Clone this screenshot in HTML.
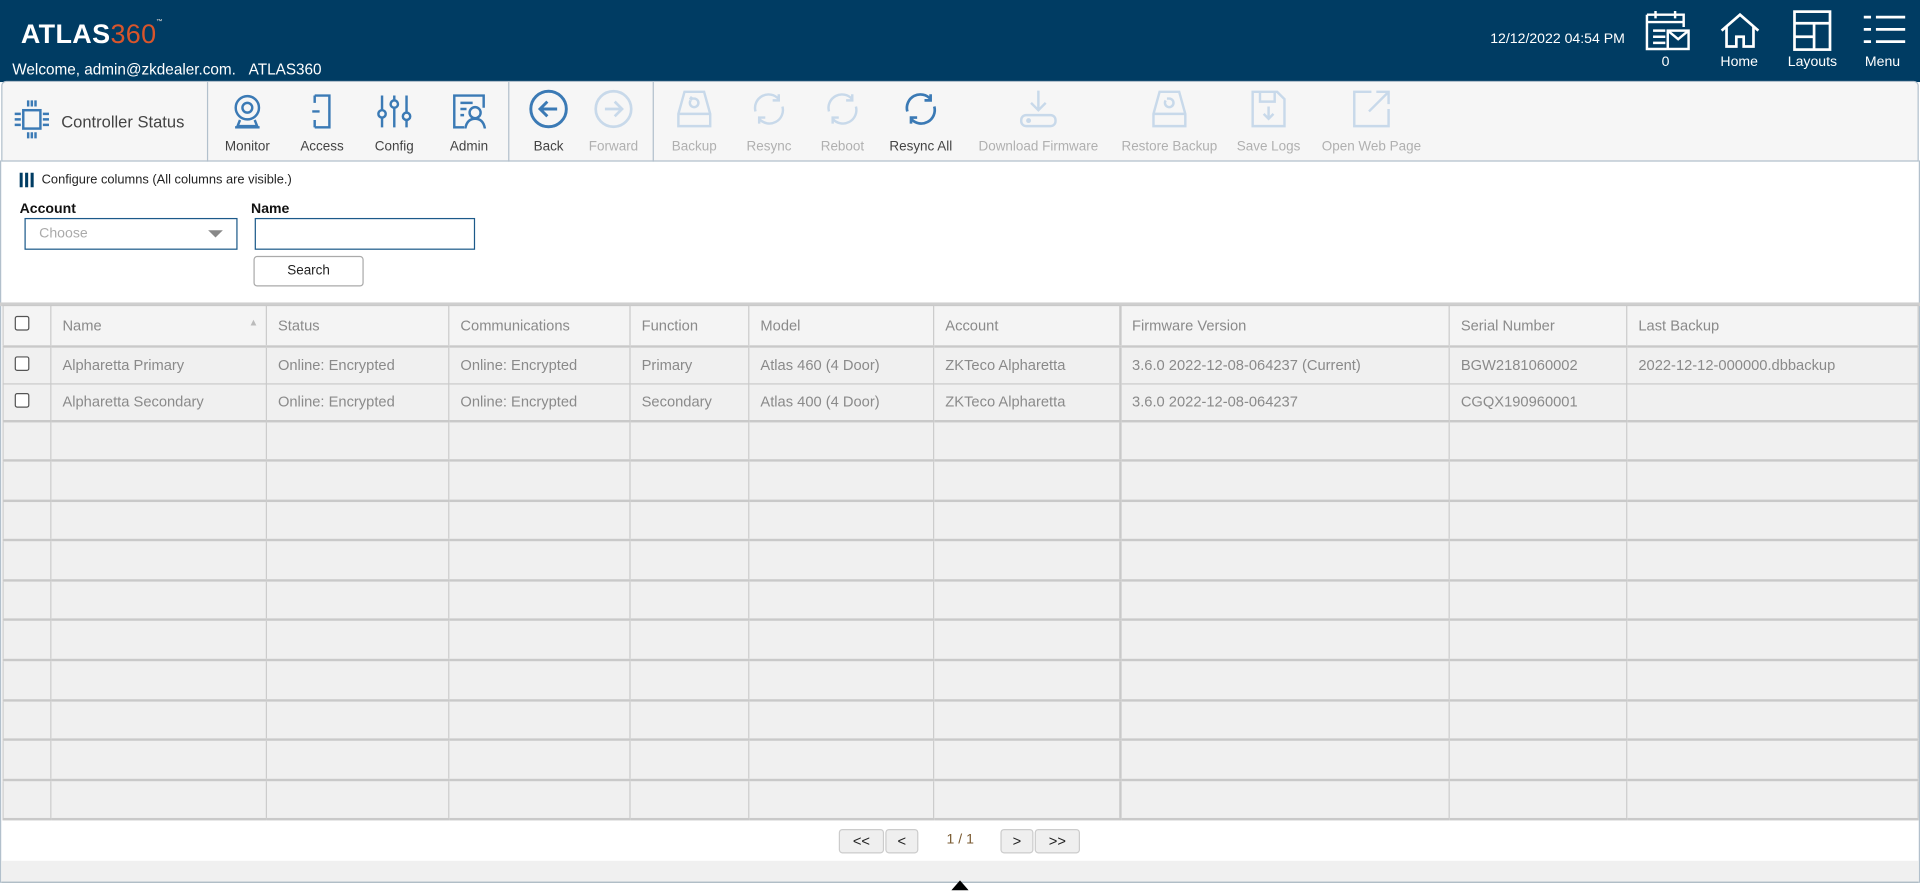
<!DOCTYPE html>
<html><head><meta charset="utf-8"><style>
*{box-sizing:border-box;margin:0;padding:0}
html,body{width:1920px;height:892px;overflow:hidden;background:#fff;font-family:"Liberation Sans",sans-serif}
#w{position:absolute;left:0;top:0;width:1568px;height:728px;transform:scale(1.22449);transform-origin:0 0}
.a{position:absolute}
#hdr{left:0;top:0;width:1568px;height:67px;background:#003c63}
.wt{color:#fff;font-size:12.5px}
#tb{left:1px;top:66px;width:1566px;height:66px;background:#f6f6f6;border:1px solid #b2c0cc;border-radius:4px 4px 0 0}
.div{top:0;width:1px;height:65px;background:#b2c0cc}
.btn{top:6px;width:80px;height:56px;text-align:center;font-size:11px;color:#444}
.btn svg{display:block;margin:0 auto}
.btn span{position:absolute;left:0;right:0;top:41px;white-space:nowrap}
.dis{color:#b0b0b0}
.lbl{font-size:11.5px;font-weight:bold;color:#111}
table{border-collapse:collapse;position:absolute;left:2px;top:249px;width:1565px;table-layout:fixed;font-size:12px;color:#8a8a8a}
td{border:1px solid #c9c9c9;border-bottom:2px solid #c9c9c9;height:32.6px;padding-left:9px;background:#f0f0f0;white-space:nowrap;overflow:hidden}
tr.h td{background:#f4f4f4;height:33px}
tr.d td{height:30.5px;border-bottom:1px solid #c9c9c9}
tr.d2 td{border-bottom:2px solid #c9c9c9}
.cb{display:inline-block;width:12px;height:12px;border:1px solid #555;border-radius:2px;background:#fff}
.pb{top:677px;height:20px;border:1px solid #ccc;border-radius:3px;background:#efefef;font-size:12px;color:#222;text-align:center;line-height:18px}
</style></head><body><div id="w">
<div id="hdr" class="a"></div>
<div class="a" style="left:17px;top:15px;font-size:22px;font-weight:bold;color:#fff;letter-spacing:0.3px">ATLAS<span style="color:#d9552b;font-weight:normal">360</span><span style="font-size:5px;vertical-align:top;color:#ccc">™</span></div>
<div class="a wt" style="left:10px;top:50px">Welcome, admin@zkdealer.com. &nbsp;&nbsp;ATLAS360</div>
<div class="a wt" style="left:1217px;top:26px;font-size:11.5px">12/12/2022 04:54 PM</div>
<svg class="a" style="left:1343px;top:8px" width="38" height="34" viewBox="0 0 38 34" fill="none" stroke="#fff" stroke-width="2"><path d="M2 4h30v10M2 4v28h16M2 10h30M9 1v6M25 1v6M7 17h10M7 22h10M7 27h10"/><rect x="19" y="17" width="17" height="15"/><path d="M19 17l8.5 7 8.5-7"/></svg>
<div class="a wt" style="left:1357px;top:45px;font-size:11.5px">0</div>
<svg class="a" style="left:1404px;top:10px" width="34" height="30" viewBox="0 0 34 30" fill="none" stroke="#fff" stroke-width="2.2"><path d="M2 15L17 2l15 13M6 12v16h8v-8h6v8h8V12"/></svg>
<div class="a wt" style="left:1405px;top:45px;font-size:11.5px">Home</div>
<svg class="a" style="left:1464px;top:8px" width="32" height="34" viewBox="0 0 32 34" fill="none" stroke="#fff" stroke-width="2.2"><rect x="1.5" y="1.5" width="29" height="31"/><path d="M1.5 11h29M1.5 22h16M17.5 11v21.5"/></svg>
<div class="a wt" style="left:1460px;top:45px;font-size:11.5px">Layouts</div>
<svg class="a" style="left:1522px;top:12px" width="34" height="26" viewBox="0 0 34 26" stroke="#fff" stroke-width="2.2"><path d="M0 2h6M10 2h24M0 12h6M10 12h24M0 22h6M10 22h24"/></svg>
<div class="a wt" style="left:1523px;top:45px;font-size:11.5px">Menu</div>

<div id="tb" class="a">
<svg class="a" style="left:9px;top:13px" width="30" height="36" viewBox="0 0 30 36" fill="none" stroke="#3b7ab5" stroke-width="2"><rect x="8" y="10" width="14" height="15"/><path d="M12 2v5M15 2v5M18 2v5M12 28v5M15 28v5M18 28v5M1 13h5M1 17.5h5M1 22h5M24 13h5M24 17.5h5M24 22h5"/></svg>
<div class="a" style="left:48px;top:25px;font-size:13.5px;color:#444">Controller Status</div>
<div class="a div" style="left:167px"></div>
<div class="a btn" style="left:160px"><svg style="margin-top:4px" width="26" height="28" viewBox="0 0 26 28" fill="none" stroke="#3b7ab5" stroke-width="2"><circle cx="13" cy="11" r="9.5"/><circle cx="13" cy="11" r="4"/><path d="M7 21l-2 5h16l-2-5M3 27h20"/></svg><span>Monitor</span></div>
<div class="a btn" style="left:221px"><svg style="margin-top:4px" width="26" height="28" viewBox="0 0 26 28" fill="none" stroke="#3b7ab5" stroke-width="2"><path d="M7 1h12v26H7M7 1v6M7 21v6M5 14h6"/></svg><span>Access</span></div>
<div class="a btn" style="left:280px"><svg style="margin-top:4px" width="30" height="28" viewBox="0 0 30 28" fill="none" stroke="#3b7ab5" stroke-width="2"><path d="M5 1v12M5 19v8M15 1v4M15 11v16M25 1v14M25 21v6"/><circle cx="5" cy="16" r="3"/><circle cx="15" cy="8" r="3"/><circle cx="25" cy="18" r="3"/></svg><span>Config</span></div>
<div class="a btn" style="left:341px"><svg style="margin-top:4px" width="30" height="28" viewBox="0 0 30 28" fill="none" stroke="#3b7ab5" stroke-width="2"><path d="M11 27H3V1h24v10M8 7h10M8 12h5M8 17h3"/><circle cx="20" cy="15" r="4.5"/><path d="M12 28c1-6 4-8 8-8s7 2 8 8"/></svg><span>Admin</span></div>
<div class="a div" style="left:413px"></div>
<div class="a btn" style="left:406px"><svg width="32" height="32" viewBox="0 0 32 32" fill="none" stroke="#3b7ab5" stroke-width="2.4"><circle cx="16" cy="16" r="14.5"/><path d="M23 16H9M15 10l-6 6 6 6"/></svg><span>Back</span></div>
<div class="a btn dis" style="left:459px"><svg width="32" height="32" viewBox="0 0 32 32" fill="none" stroke="#c8d9ea" stroke-width="2.2"><circle cx="16" cy="16" r="14.5"/><path d="M9 16h14M17 10l6 6-6 6"/></svg><span>Forward</span></div>
<div class="a div" style="left:531px"></div>
<div class="a btn dis" style="left:525px"><svg width="30" height="32" viewBox="0 0 30 32" fill="none" stroke="#c8d9ea" stroke-width="2"><path d="M7 2h16l5 18v10H2V20zM2 20h26"/><path d="M12 9a3.5 3.5 0 1 0 3-1.5h-2M13 6l-1 1.5 1.5 1"/></svg><span>Backup</span></div>
<div class="a btn dis" style="left:586px"><svg width="32" height="32" viewBox="0 0 32 32" fill="none" stroke="#c8d9ea" stroke-width="2"><path d="M5 18a11 11 0 0 1 19-10M27 14a11 11 0 0 1-19 10"/><path d="M24 4v5h-5" /><path d="M8 28v-5h5"/></svg><span>Resync</span></div>
<div class="a btn dis" style="left:646px"><svg width="32" height="32" viewBox="0 0 32 32" fill="none" stroke="#c8d9ea" stroke-width="2"><path d="M5 18a11 11 0 0 1 19-10M27 14a11 11 0 0 1-19 10"/><path d="M24 4v5h-5"/><path d="M8 28v-5h5"/></svg><span>Reboot</span></div>
<div class="a btn" style="left:710px"><svg width="32" height="32" viewBox="0 0 32 32" fill="none" stroke="#3b7ab5" stroke-width="2.2"><path d="M5 18a11 11 0 0 1 19-10M27 14a11 11 0 0 1-19 10"/><path d="M24 4v5h-5"/><path d="M8 28v-5h5"/></svg><span>Resync All</span></div>
<div class="a btn dis" style="left:784px;width:124px"><svg width="34" height="32" viewBox="0 0 34 32" fill="none" stroke="#c8d9ea" stroke-width="2"><path d="M17 1v16M11 11l6 6 6-6"/><rect x="3" y="21" width="28" height="9" rx="4"/><circle cx="9" cy="25.5" r="1"/></svg><span>Download Firmware</span></div>
<div class="a btn dis" style="left:906px;width:94px"><svg width="30" height="32" viewBox="0 0 30 32" fill="none" stroke="#c8d9ea" stroke-width="2"><path d="M7 2h16l5 18v10H2V20zM2 20h26"/><path d="M12 9a3.5 3.5 0 1 0 3-1.5h-2"/></svg><span>Restore Backup</span></div>
<div class="a btn dis" style="left:994px"><svg width="30" height="32" viewBox="0 0 30 32" fill="none" stroke="#c8d9ea" stroke-width="2"><path d="M2 2h20l6 6v22H2zM8 2v8h12V2"/><path d="M15 14v10M11 20l4 4 4-4"/></svg><span>Save Logs</span></div>
<div class="a btn dis" style="left:1071px;width:94px"><svg width="32" height="32" viewBox="0 0 32 32" fill="none" stroke="#c8d9ea" stroke-width="2"><path d="M16 2H2v28h28V16M20 2h10v10M30 2L14 18"/></svg><span>Open Web Page</span></div>
</div>

<svg class="a" style="left:16px;top:141px" width="12" height="12"><rect x="0" y="0" width="2.5" height="12" fill="#003c63"/><rect x="4.5" y="0" width="2.5" height="12" fill="#003c63"/><rect x="9" y="0" width="2.5" height="12" fill="#003c63"/></svg>
<div class="a" style="left:34px;top:141px;font-size:10.5px;color:#222">Configure columns (All columns are visible.)</div>
<div class="a lbl" style="left:16px;top:165px">Account</div>
<div class="a lbl" style="left:205px;top:165px">Name</div>
<div class="a" style="left:20px;top:178px;width:174px;height:26px;border:1px solid #1c5a8a;font-size:11.5px;color:#aaa;padding:6px 0 0 11px">Choose<span style="position:absolute;right:11px;top:9px;border:6px solid transparent;border-top:6px solid #888;border-bottom:0"></span></div>
<div class="a" style="left:208px;top:178px;width:180px;height:26px;border:1px solid #1c5a8a"></div>
<div class="a" style="left:207px;top:209px;width:90px;height:25px;border:1px solid #aaa;border-radius:3px;font-size:11px;text-align:center;line-height:23px;color:#222">Search</div>
<div class="a" style="left:0;top:131px;width:1px;height:590px;background:#b2c0cc"></div>
<div class="a" style="left:1567px;top:131px;width:1px;height:590px;background:#b2c0cc"></div>
<div class="a" style="left:0;top:247px;width:1568px;height:3px;background:#cfcfcf"></div>

<table>
<colgroup><col style="width:39px"><col style="width:176px"><col style="width:149px"><col style="width:148px"><col style="width:97px"><col style="width:151px"><col style="width:152px"><col style="width:269px"><col style="width:145px"><col></colgroup>
<tr class="h"><td><span class="cb"></span></td><td>Name<span style="float:right;margin-right:6px;font-size:8px;color:#bbb">▲</span></td><td>Status</td><td>Communications</td><td>Function</td><td>Model</td><td>Account</td><td style="border-left:2px solid #c9c9c9">Firmware Version</td><td>Serial Number</td><td>Last Backup</td></tr>
<tr class="d"><td><span class="cb"></span></td><td>Alpharetta Primary</td><td>Online: Encrypted</td><td>Online: Encrypted</td><td>Primary</td><td>Atlas 460 (4 Door)</td><td>ZKTeco Alpharetta</td><td style="border-left:2px solid #c9c9c9">3.6.0 2022-12-08-064237 (Current)</td><td>BGW2181060002</td><td>2022-12-12-000000.dbbackup</td></tr>
<tr class="d d2"><td><span class="cb"></span></td><td>Alpharetta Secondary</td><td>Online: Encrypted</td><td>Online: Encrypted</td><td>Secondary</td><td>Atlas 400 (4 Door)</td><td>ZKTeco Alpharetta</td><td style="border-left:2px solid #c9c9c9">3.6.0 2022-12-08-064237</td><td>CGQX190960001</td><td></td></tr>
<tr><td></td><td></td><td></td><td></td><td></td><td></td><td></td><td style="border-left:2px solid #c9c9c9"></td><td></td><td></td></tr>
<tr><td></td><td></td><td></td><td></td><td></td><td></td><td></td><td style="border-left:2px solid #c9c9c9"></td><td></td><td></td></tr>
<tr><td></td><td></td><td></td><td></td><td></td><td></td><td></td><td style="border-left:2px solid #c9c9c9"></td><td></td><td></td></tr>
<tr><td></td><td></td><td></td><td></td><td></td><td></td><td></td><td style="border-left:2px solid #c9c9c9"></td><td></td><td></td></tr>
<tr><td></td><td></td><td></td><td></td><td></td><td></td><td></td><td style="border-left:2px solid #c9c9c9"></td><td></td><td></td></tr>
<tr><td></td><td></td><td></td><td></td><td></td><td></td><td></td><td style="border-left:2px solid #c9c9c9"></td><td></td><td></td></tr>
<tr><td></td><td></td><td></td><td></td><td></td><td></td><td></td><td style="border-left:2px solid #c9c9c9"></td><td></td><td></td></tr>
<tr><td></td><td></td><td></td><td></td><td></td><td></td><td></td><td style="border-left:2px solid #c9c9c9"></td><td></td><td></td></tr>
<tr><td></td><td></td><td></td><td></td><td></td><td></td><td></td><td style="border-left:2px solid #c9c9c9"></td><td></td><td></td></tr>
<tr><td></td><td></td><td></td><td></td><td></td><td></td><td></td><td style="border-left:2px solid #c9c9c9"></td><td></td><td></td></tr>
</table>

<div class="a pb" style="left:685px;width:37px">&lt;&lt;</div>
<div class="a pb" style="left:723px;width:27px">&lt;</div>
<div class="a" style="left:773px;top:680px;font-size:11.5px;color:#7a5a30">1 / 1</div>
<div class="a pb" style="left:817px;width:27px">&gt;</div>
<div class="a pb" style="left:845px;width:37px">&gt;&gt;</div>
<div class="a" style="left:1px;top:703px;width:1566px;height:18px;background:#f0f0f0;border-bottom:1px solid #a5b4bf"></div>
<div class="a" style="left:777px;top:719px;width:0;height:0;border:7px solid transparent;border-bottom:8px solid #000;border-top:0"></div>
</div></body></html>
